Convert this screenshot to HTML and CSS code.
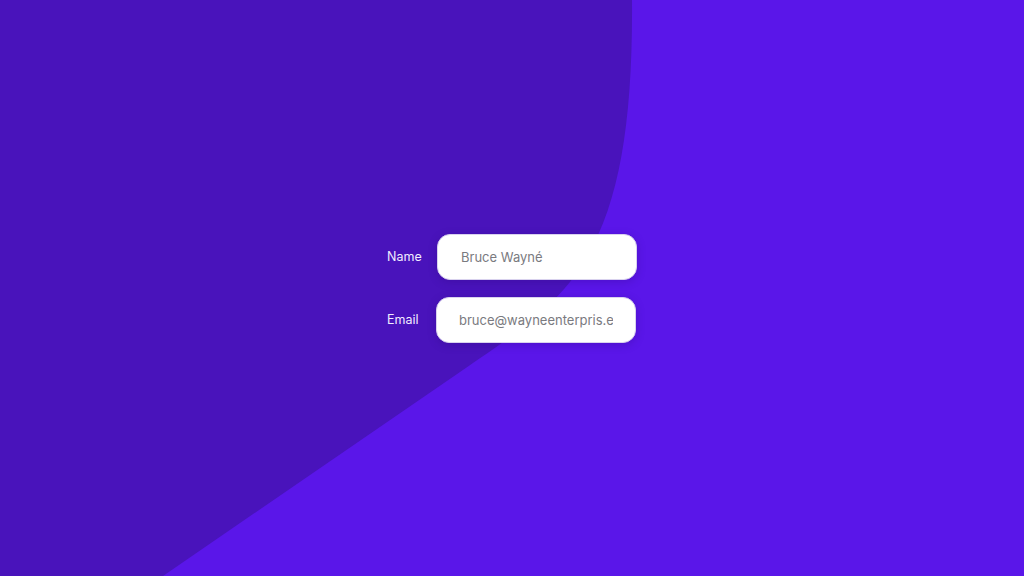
FILE: index.html
```html
<!DOCTYPE html>
<html lang="en">
<head>
<meta charset="utf-8">
<title>Form</title>
<link rel="stylesheet" href="styles.css">
</head>
<body>
<svg class="bg" viewBox="0 0 1024 576" preserveAspectRatio="none" aria-hidden="true">
  <path d="M0,0 L632,0 C633,140 615,225 570,282 C543,315 510,338 460,372 L163,576 L0,576 Z" fill="#4913bb"/>
</svg>
<main class="stage">
  <form class="form">
    <label class="row">
      <span class="label">Name</span>
      <input class="field" type="text" value="Bruce Wayné">
    </label>
    <label class="row">
      <span class="label">Email</span>
      <input class="field field-email" type="text" value="bruce@wayneenterpris.es">
    </label>
  </form>
</main>
</body>
</html>
```
FILE: styles.css
```css
html, body {
  margin: 0;
  height: 100%;
}
body {
  background: #5a16e9;
  font-family: "Inter", "Noto Sans", sans-serif;
  overflow: hidden;
  position: relative;
}
.bg {
  position: absolute;
  left: 0;
  top: 0;
  width: 100%;
  height: 100%;
}
.stage {
  position: relative;
  height: 100%;
  display: flex;
  align-items: center;
  justify-content: center;
}
.form {
  display: flex;
  flex-direction: column;
  gap: 17px;
  margin-top: 0;
}
.row {
  display: flex;
  align-items: center;
}
.label {
  width: 50px;
  color: #f1ecff;
  font-size: 12.5px;
}
.field {
  box-sizing: border-box;
  width: 200px;
  height: 46px;
  padding: 0 22px 0 23px;
  border: 1px solid #d9d2ee;
  border-radius: 13px;
  background: #ffffff;
  color: #7a7a80;
  font-family: "Inter", "Noto Sans", sans-serif;
  font-size: 13px;
  box-shadow: 0 2px 8px rgba(40, 0, 110, 0.25);
  outline: none;
}
.field-email {
  margin-left: -1px;
  padding-left: 22px;
}
```
